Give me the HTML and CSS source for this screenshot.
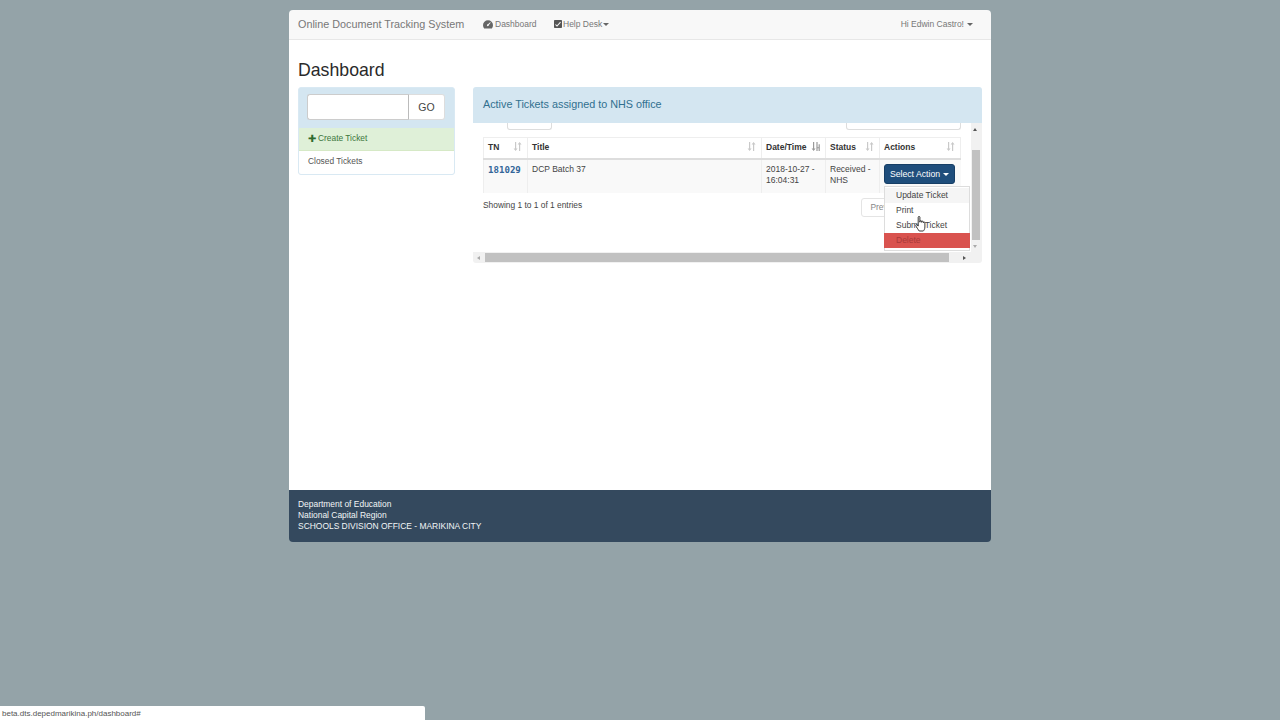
FILE: index.html
```html
<!DOCTYPE html>
<html lang="en">
<head>
<meta charset="utf-8">
<title>Dashboard</title>
<link rel="stylesheet" href="styles.css">
</head>
<body>
<svg class="defs" width="0" height="0" aria-hidden="true">
  <symbol id="sort-icon" viewBox="0 0 9 9">
    <path d="M2 0h1.2v6.4h1.4L2.6 9 .6 6.4H2zM6 9V2.6H4.6L6.6 0l2 2.6H7.2V9z"/>
  </symbol>
  <symbol id="sort-alpha" viewBox="0 0 9 9">
    <path d="M2 0h1.2v6.4h1.4L2.6 9 .6 6.4H2zM5.4 0h1.2v5.2h1v-3h1.2V9H7.6V6.2h-1V9H5.4z"/>
  </symbol>
</svg>
<div class="page">
  <nav class="navbar">
    <span class="brand">Online Document Tracking System</span>
    <a class="nav-link nav-dash"><svg class="ico" viewBox="0 0 12 10" width="10" height="9"><path fill="#666" d="M6 0a6 6 0 0 0-6 6c0 1.5.5 2.8 1.4 3.8h9.2A6 6 0 0 0 12 6a6 6 0 0 0-6-6zm0 4.6 2.6-2.2.6.6-2.2 2.6a1.2 1.2 0 1 1-1-1z"/></svg> Dashboard</a>
    <a class="nav-link nav-help"><svg class="ico" viewBox="0 0 10 10" width="8" height="8"><path fill="#555" d="M1 0h8a1 1 0 0 1 1 1v8a1 1 0 0 1-1 1H1a1 1 0 0 1-1-1V1a1 1 0 0 1 1-1zm1.2 5.2L1.4 6l2.4 2.4L8.6 3l-.9-.8-3.9 4.4z"/></svg> Help Desk<i class="caret caret-tight"></i></a>
    <a class="nav-link nav-user">Hi Edwin Castro! <i class="caret"></i></a>
  </nav>
  <main class="content">
    <h1 class="title">Dashboard</h1>
    <div class="columns">
      <aside class="side">
        <div class="search">
          <div class="search-input"></div>
          <div class="search-btn">GO</div>
        </div>
        <div class="side-create"><span class="plus">✚</span> Create Ticket</div>
        <div class="side-closed">Closed Tickets</div>
      </aside>
      <section class="panel">
        <div class="panel-head">Active Tickets assigned to NHS office</div>
        <div class="panel-body">
          <div class="scroll-view">
            <div class="controls">
              <div class="ctl-left"></div>
              <div class="ctl-right"></div>
            </div>
            <div class="table">
              <div class="row head">
                <div class="c c-tn">TN<svg class="sort"><use href="#sort-icon"/></svg></div>
                <div class="c c-title">Title<svg class="sort"><use href="#sort-icon"/></svg></div>
                <div class="c c-date">Date/Time<svg class="sort sort-on"><use href="#sort-alpha"/></svg></div>
                <div class="c c-status">Status<svg class="sort"><use href="#sort-icon"/></svg></div>
                <div class="c c-act">Actions<svg class="sort"><use href="#sort-icon"/></svg></div>
              </div>
              <div class="row body">
                <div class="c c-tn"><a class="tn">181029</a></div>
                <div class="c c-title">DCP Batch 37</div>
                <div class="c c-date">2018-10-27 -<br>16:04:31</div>
                <div class="c c-status">Received -<br>NHS</div>
                <div class="c c-act"><span class="btn-action">Select Action <i class="caret caret-white"></i></span></div>
              </div>
            </div>
            <div class="tfoot">
              <span>Showing 1 to 1 of 1 entries</span>
              <span class="prev">Previous</span>
            </div>
            <ul class="menu">
              <li class="menu-hover">Update Ticket</li>
              <li>Print</li>
              <li>Submit Ticket</li>
              <li class="menu-del">Delete</li>
            </ul>
            <svg class="cursor" viewBox="0 0 12 16" width="12" height="16"><path fill="#fff" stroke="#222" stroke-width=".9" d="M3.2 1.2c0-1 1.7-1 1.7 0v5l.1-1c.3-.8 1.5-.7 1.6.1v1l.2-.7c.3-.7 1.4-.6 1.5.2v1l.2-.4c.4-.6 1.4-.4 1.4.4V11c0 2-1 3.5-1.6 4H4.2C3.5 14 1 10.5.8 9.6c-.2-.9.8-1.4 1.4-.7l1 1.2z"/></svg>
          </div>
          <div class="vbar"><span class="arr up"></span><div class="vthumb"></div><span class="arr down"></span></div>
          <div class="hbar"><span class="arr left"></span><div class="htrack"><div class="hthumb"></div></div><span class="arr right"></span></div>
        </div>
      </section>
    </div>
  </main>
  <footer class="footer">
    <div>Department of Education</div>
    <div>National Capital Region</div>
    <div>SCHOOLS DIVISION OFFICE - MARIKINA CITY</div>
  </footer>
</div>
<div class="status">beta.dts.depedmarikina.ph/dashboard#</div>
</body>
</html>
```

FILE: styles.css
```css
* { box-sizing: border-box; }
html, body { margin: 0; height: 100%; }
body {
  background: #94a3a8;
  font-family: "Liberation Sans", Arial, sans-serif;
  font-size: 8.5px;
  color: #333;
  overflow: hidden;
}
.defs { position: absolute; }
.page {
  width: 702px;
  margin: 10px 0 0 289px;
  border-radius: 4px;
  overflow: hidden;
}
.navbar {
  height: 30px;
  background: #f8f8f8;
  border-bottom: 1px solid #e7e7e7;
  display: flex;
  align-items: center;
  color: #777;
  padding-bottom: 1px;
}
.brand { font-size: 10.8px; margin-left: 9px; width: 184px; white-space: nowrap; }
.nav-link { font-size: 8.5px; white-space: nowrap; display: flex; align-items: center; gap: 2px; }
.nav-dash { margin-left: 1px; width: 71px; }
.nav-help { margin-right: auto; gap: 1px; }
.nav-user { margin-right: 18px; gap: 2px; }
.ico { flex: none; }
.caret {
  display: inline-block;
  border-top: 3px solid #666;
  border-left: 3px solid transparent;
  border-right: 3px solid transparent;
  margin-left: 1px;
}
.caret-tight { margin-left: 0; }
.caret-white { border-top-color: #fff; }

.content { background: #fff; height: 450px; padding: 0 9px; }
.title { margin: 0; padding-top: 20px; height: 47px; font-weight: 400; font-size: 17.7px; line-height: 21px; color: #2a2a2a; }
.columns { display: flex; gap: 18px; align-items: flex-start; }

.side {
  width: 157px;
  border: 1px solid #d9e9f3;
  border-radius: 3px;
  background: #d4e6f1;
  overflow: hidden;
  font-size: 8.4px;
}
.search { display: flex; height: 26px; margin: 6px 9px 8px 8px; }
.search-input { flex: 1; background: #fff; border: 1px solid #ccc; border-right: 1px solid #bbb; border-radius: 3px 0 0 3px; }
.search-btn { width: 36px; background: #fff; border: 1px solid #ddd; border-left: 0; border-radius: 0 3px 3px 0; font-size: 10.5px; color: #444; display: flex; align-items: center; justify-content: center; padding-bottom: 1px; }
.side-create { height: 23px; background: #dff0d8; border-bottom: 1px solid #d6e9c6; color: #3c763d; padding: 0 9px 2px; display: flex; align-items: center; gap: 2px; }
.plus { font-size: 10px; color: #2f6b2f; }
.side-closed { height: 23px; background: #fff; color: #555; padding: 0 9px 3px; display: flex; align-items: center; }

.panel {
  width: 509px;
  border-radius: 3px;
  overflow: hidden;
  background: #fff;
}
.panel-head {
  height: 36px;
  background: #d4e6f1;
  color: #31708f;
  font-size: 10.8px;
  display: flex;
  align-items: center;
  padding: 0 0 2px 10px;
}
.panel-body {
  display: grid;
  grid-template-columns: 498px 11px;
  grid-template-rows: 129px 11px;
  background: #fff;
}
.scroll-view { position: relative; overflow: hidden; padding: 0 10px; }
.controls { height: 14px; display: flex; justify-content: space-between; padding: 0 0 0 24px; }
.ctl-left, .ctl-right { height: 7px; border: 1px solid #ddd; border-top: 0; border-radius: 0 0 3px 3px; background: #fff; }
.ctl-left { width: 45px; }
.ctl-right { width: 115px; }
.table { width: 478px; margin-bottom: 5px; }
.row { display: flex; }
.row.head { height: 23px; border-top: 1px solid #eee; border-bottom: 2px solid #ddd; font-weight: 700; font-size: 8.5px; color: #333; }
.row.body { height: 33px; background: #f9f9f9; font-size: 8.5px; color: #444; line-height: 11px; }
.c { padding: 4px; position: relative; border-left: 1px solid #eee; }
.row.head .c { padding-top: 3px; line-height: 12px; }
.row.head .c:last-child { border-right: 1px solid #eee; }
.c-tn { width: 44px; }
.c-title { width: 234px; }
.c-date { width: 64px; }
.c-status { width: 54px; }
.c-act { width: 82px; }
.sort { position: absolute; right: 5px; top: 4px; width: 9px; height: 9px; fill: #c9c9c9; }
.sort-on { fill: #999; }
.tn { font-family: "DejaVu Sans Mono", "Liberation Mono", monospace; font-weight: 700; font-size: 9.1px; color: #336699; line-height: 13px; }
.btn-action {
  display: flex;
  width: 71px;
  height: 20px;
  background: #1f4e7c;
  border: 1px solid #173f66;
  border-radius: 3px;
  color: #fff;
  align-items: center;
  justify-content: center;
  gap: 2px;
  font-size: 8.7px;
}
.tfoot { display: flex; justify-content: space-between; align-items: flex-start; color: #444; font-size: 8.4px; }
.tfoot span:first-child { padding-top: 2px; }
.prev { border: 1px solid #e4e4e4; border-radius: 3px 0 0 3px; color: #888; padding: 3px 8px; margin-right: 49px; line-height: 11px; }
.menu {
  position: absolute;
  left: 411px;
  top: 63px;
  width: 86px;
  margin: 0;
  padding: 1px 0 0;
  list-style: none;
  background: #fff;
  border: 1px solid #ddd;
  font-size: 8.5px;
  color: #444;
  height: 65px;
}
.menu li { height: 15px; line-height: 15px; padding-left: 11px; }
.menu-hover { background: #f5f5f5; }
.menu .menu-del { background: #d9534f; color: #a83a3a; margin: 0 -1px; padding-left: 12px; }
.cursor { position: absolute; left: 442px; top: 93px; }

.vbar { background: #f1f1f1; position: relative; display: flex; flex-direction: column; align-items: center; justify-content: space-between; padding-right: 3px; }
.vthumb { position: absolute; left: 1px; right: 2px; top: 27px; height: 90px; background: #c1c1c1; }
.hbar { grid-column: 1 / 3; background: #f1f1f1; display: flex; align-items: center; padding: 0 16px 0 4px; gap: 5px; }
.htrack { flex: 1; height: 100%; padding: 1px 0; }
.hthumb { width: 464px; height: 100%; background: #c1c1c1; }
.arr { display: block; width: 0; height: 0; flex: none; }
.arr.up { margin-top: 5px; border: 2.5px solid transparent; border-top: 0; border-bottom: 3px solid #555; }
.arr.down { margin-bottom: 4px; border: 2.5px solid transparent; border-bottom: 0; border-top: 3px solid #aaa; }
.arr.left { border: 2.5px solid transparent; border-left: 0; border-right: 3px solid #aaa; }
.arr.right { border: 2.5px solid transparent; border-right: 0; border-left: 3px solid #555; }

.footer {
  height: 52px;
  background: #34495e;
  color: #f2f5f6;
  padding: 9px 9px 0;
  font-size: 8.45px;
  line-height: 11.2px;
}
.status {
  position: fixed;
  left: 0;
  bottom: 0;
  width: 425px;
  height: 14px;
  background: #fff;
  border-top-right-radius: 2px;
  font-size: 8px;
  line-height: 15px;
  padding-left: 2px;
  color: #555;
}
```
